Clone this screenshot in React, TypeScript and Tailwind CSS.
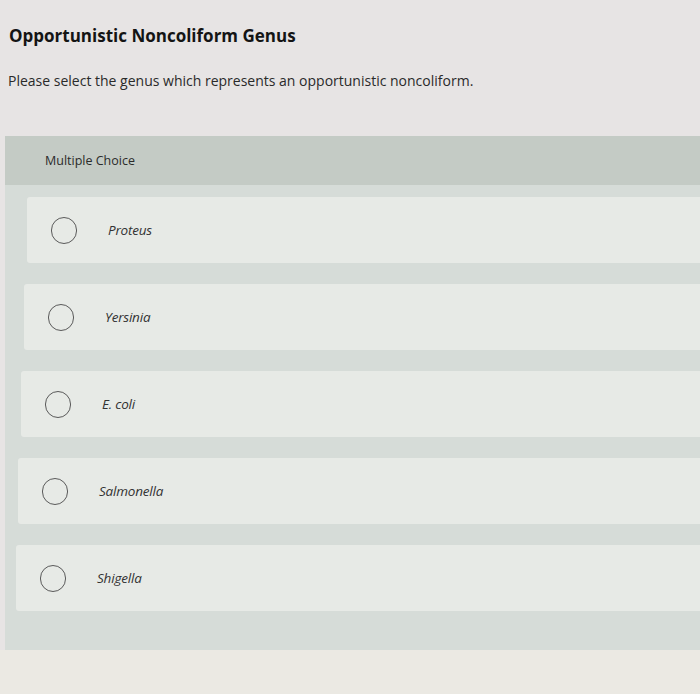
const choices = [
  { label: 'Proteus', shift: 'ml-[22px]' },
  { label: 'Yersinia', shift: 'ml-[19px]' },
  { label: 'E. coli', shift: 'ml-[16px]' },
  { label: 'Salmonella', shift: 'ml-[13px]' },
  { label: 'Shigella', shift: 'ml-[11px]' },
];

export default function App() {
  return (
    <div
      className="w-[700px] h-[694px] overflow-hidden bg-[#e7e4e4] text-[#1f1f1f] flex flex-col"
      style={{ fontFamily: '"Open Sans", Lato, sans-serif' }}
    >
      {/* Question header */}
      <div className="pl-[9px] pt-[24px]">
        <h1 className="text-[17px] font-bold leading-[24px] text-[#141414]">
          Opportunistic Noncoliform Genus
        </h1>
        <p className="mt-[23px] text-[14px] leading-[20px] text-[#2a2a2a] -ml-px">
          Please select the genus which represents an opportunistic noncoliform.
        </p>
      </div>

      {/* Answer panel */}
      <div className="mt-[45px] ml-[5px] bg-[#d6dcd8]">
        <div className="h-[49px] bg-[#c4cbc5] flex items-center pl-[40px]">
          <span className="text-[12.5px] text-[#2b2b2b] pt-[2px]">Multiple Choice</span>
        </div>
        <div className="pt-[12px] pb-[39px] flex flex-col gap-[21px]">
          {choices.map((c) => (
            <div
              key={c.label}
              className={`${c.shift} h-[66px] bg-[#e7eae6] rounded-l-[3px] flex items-center`}
            >
              <span className="ml-[24px] w-[26px] h-[27px] rounded-full border-[1.5px] border-[#5a5a5a] shrink-0" />
              <span className="ml-[31px] text-[13.5px] italic text-[#333] tracking-[-0.2px]">{c.label}</span>
            </div>
          ))}
        </div>
      </div>

      <div className="flex-1 bg-[#ebe9e3]" />
    </div>
  );
}
